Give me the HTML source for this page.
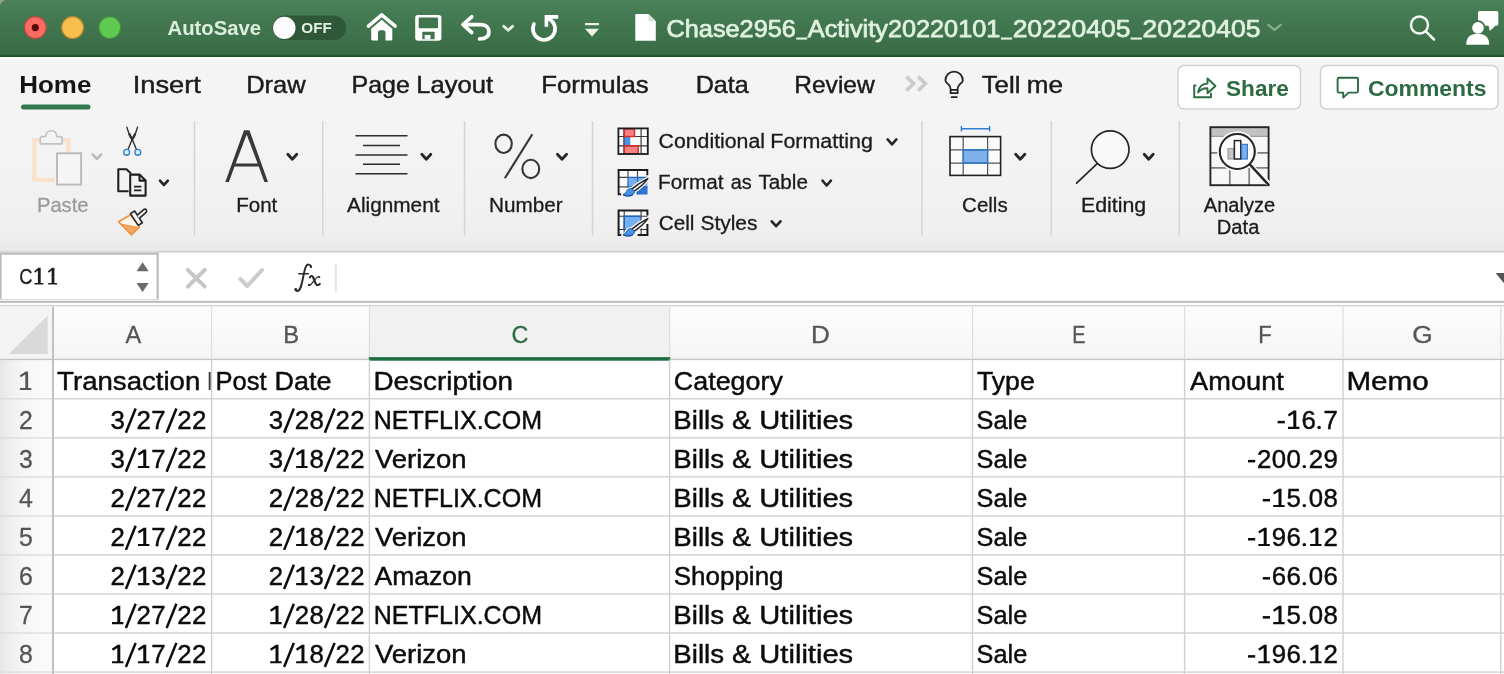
<!DOCTYPE html>
<html lang="en">
<head>
<meta charset="utf-8">
<title>Chase2956_Activity20220101_20220405_20220405</title>
<style>
html,body{margin:0;padding:0;background:#fff;overflow:hidden;}
#app{position:relative;width:1504px;height:674px;overflow:hidden;font-family:"Liberation Sans", sans-serif;}
svg{position:absolute;left:0;top:0;display:block;will-change:transform;}
svg text{font-family:"Liberation Sans", sans-serif;white-space:pre;}
.serif{font-family:"Liberation Serif", serif;}
</style>
</head>
<body>
<div id="app">
<svg width="1504" height="674" viewBox="0 0 1504 674">
<defs>
<linearGradient id="gTitle" x1="0" y1="0" x2="0" y2="1">
<stop offset="0" stop-color="#4a8158"/><stop offset="0.5" stop-color="#40754d"/><stop offset="1" stop-color="#396b44"/>
</linearGradient>
<linearGradient id="gRowHdr" x1="0" y1="0" x2="1" y2="0">
<stop offset="0" stop-color="#e6e6e6"/><stop offset="0.18" stop-color="#efefef"/><stop offset="0.45" stop-color="#f6f6f6"/><stop offset="1" stop-color="#fbfbfb"/>
</linearGradient>
<linearGradient id="gColHdr" x1="0" y1="0" x2="0" y2="1">
<stop offset="0" stop-color="#fdfdfd"/><stop offset="1" stop-color="#f5f5f5"/>
</linearGradient>
</defs>
<g id="titlebar">
<rect x="0" y="0" width="1504" height="57" fill="url(#gTitle)"/>
<rect x="0" y="54.6" width="1504" height="1" fill="#33633e"/>
<rect x="0" y="55.5" width="1504" height="1.9" fill="#214d2c"/>
<path d="M0 0 H5.5 Q1.2 1.2 0 5.5 Z" fill="#93a397"/>
<circle cx="35.3" cy="27.6" r="10.9" fill="#fb6b62" stroke="#b94b3f" stroke-width="1.2"/>
<circle cx="35.3" cy="27.6" r="3.6" fill="#5a0907"/>
<circle cx="72.6" cy="27.6" r="10.9" fill="#f9bf4d" stroke="#b88a35" stroke-width="1.2"/>
<circle cx="109.8" cy="27.6" r="10.9" fill="#5fca52" stroke="#46923b" stroke-width="1.2"/>
<text x="167.49" y="35.10" textLength="93.66" lengthAdjust="spacingAndGlyphs" font-size="20.8" fill="#dcefdc" font-weight="bold" >AutoSave</text>
<rect x="272.5" y="15.5" width="73.5" height="24.6" rx="12.3" fill="#2e5838"/>
<circle cx="284.3" cy="27.9" r="11.2" fill="#fcfcfc"/>
<text x="301.39" y="33.30" textLength="30.43" lengthAdjust="spacingAndGlyphs" font-size="15" fill="#e4f1e4" font-weight="bold" >OFF</text>
<path d="M368.4 26.2 L381.7 14.9 L395.2 26.2" fill="none" stroke="#fff" stroke-width="3.5" stroke-linecap="round" stroke-linejoin="round"/>
<path d="M371.2 28.8 L381.7 19.8 L392.3 28.8 V39.2 Q392.3 40.4 391.1 40.4 H385.5 V32.8 Q385.5 30.3 383 30.3 H380.5 Q378 30.3 378 32.8 V40.4 H372.4 Q371.2 40.4 371.2 39.2 Z" fill="#fff"/>
<rect x="415.2" y="15" width="26.2" height="25.8" rx="2.8" fill="#fff"/>
<rect x="418.7" y="17.6" width="19.3" height="10.7" rx="0.8" fill="#3f744c"/>
<rect x="422.3" y="31.7" width="12.3" height="7.5" rx="0.6" fill="#3f744c"/>
<rect x="424.7" y="35" width="5.8" height="4.2" fill="#fff"/>
<g fill="none" stroke="#fff" stroke-width="3.7" stroke-linecap="round" stroke-linejoin="round"><path d="M471.7 16.8 L463 24.7 L471.7 32.5"/><path d="M464 24.7 H480.3 C486.6 24.7 489 28 489 31.8 C489 35.8 486.2 38.9 479.6 38.9"/></g>
<path d="M503.75 26.21 L508.20 30.25 L512.65 26.21" fill="none" stroke="#eef7ee" stroke-width="2.70" stroke-linecap="round" stroke-linejoin="round"/>
<g fill="none" stroke="#fff" stroke-width="3.6"><path d="M558.2 16.9 H546.4 V26.8" stroke-linejoin="miter"/><path d="M547.3 18.2 A11.1 11.1 0 1 1 534 24" stroke-linecap="round"/></g>
<rect x="585" y="23" width="14" height="2.2" fill="#e8f4e8"/>
<path d="M585 28.8 H599 L592 36.4 Z" fill="#e8f4e8"/>
<path d="M636.5 14 H648.5 L655.8 21.3 V40.8 H635.3 V15.2 Q635.3 14 636.5 14 Z" fill="#fff"/>
<path d="M648.5 14 L655.8 21.3 H649.7 Q648.5 21.3 648.5 20.1 Z" fill="#d4e4d7"/>
<text x="666.51" y="36.80" textLength="129.36" lengthAdjust="spacingAndGlyphs" font-size="24.6" fill="#e0f1e0" font-weight="normal"  stroke="#e0f1e0" stroke-width="0.75" stroke-linejoin="round">Chase2956</text>
<text x="807.85" y="36.80" textLength="192.47" lengthAdjust="spacingAndGlyphs" font-size="24.6" fill="#e0f1e0" font-weight="normal"  stroke="#e0f1e0" stroke-width="0.75" stroke-linejoin="round">Activity20220101</text>
<text x="1012.65" y="36.80" textLength="117.74" lengthAdjust="spacingAndGlyphs" font-size="24.6" fill="#e0f1e0" font-weight="normal"  stroke="#e0f1e0" stroke-width="0.75" stroke-linejoin="round">20220405</text>
<text x="1142.45" y="36.80" textLength="118.15" lengthAdjust="spacingAndGlyphs" font-size="24.6" fill="#e0f1e0" font-weight="normal"  stroke="#e0f1e0" stroke-width="0.75" stroke-linejoin="round">20220405</text>
<rect x="796.2" y="37.5" width="11.0" height="2.1" fill="#e0f1e0"/>
<rect x="1000.9" y="37.5" width="11.2" height="2.1" fill="#e0f1e0"/>
<rect x="1130.6" y="37.5" width="11.3" height="2.1" fill="#e0f1e0"/>
<path d="M1268.34 24.82 L1274.55 29.93 L1280.77 24.82" fill="none" stroke="#86ae8f" stroke-width="2.20" stroke-linecap="round" stroke-linejoin="round"/>
<g fill="none" stroke="#f2f8f2" stroke-width="2.5" stroke-linecap="round"><circle cx="1419.5" cy="25" r="8.5"/><path d="M1425.8 31.4 L1434 39.5"/></g>
<path d="M1479.8 11 H1496.5 Q1498.3 11 1498.3 12.8 V24 Q1498.3 25.8 1496.5 25.8 H1495.3 L1489.8 31 L1488.6 25.8 H1479.8 Q1478 25.8 1478 24 V12.8 Q1478 11 1479.8 11 Z" fill="#fff"/>
<circle cx="1478" cy="27.9" r="6.7" fill="#fff" stroke="#3f744c" stroke-width="1.7"/>
<path d="M1466.2 44.8 Q1466.2 33.8 1477.7 33.8 Q1489.2 33.8 1489.2 44.8 Z" fill="#fff"/>
</g>
<g id="tabs">
<defs><linearGradient id="gRib" x1="0" y1="0" x2="0" y2="1"><stop offset="0" stop-color="#f4f4f4"/><stop offset="0.5" stop-color="#f2f2f2"/><stop offset="0.85" stop-color="#efefef"/><stop offset="1" stop-color="#e9e9e9"/></linearGradient></defs>
<rect x="0" y="57" width="1504" height="60" fill="#f4f4f4"/>
<rect x="0" y="116" width="1504" height="136" fill="url(#gRib)"/>
<rect x="0" y="57.4" width="1504" height="2" fill="#fefcfc"/>
<rect x="0" y="59.4" width="1504" height="1.6" fill="#f9f7f7"/>
<text x="19.31" y="92.50" textLength="72.05" lengthAdjust="spacingAndGlyphs" font-size="24" fill="#151515" font-weight="bold" >Home</text>
<rect x="21" y="104.5" width="69.5" height="5" rx="2.5" fill="#2f7a4c"/>
<text x="132.77" y="92.50" textLength="68.17" lengthAdjust="spacingAndGlyphs" font-size="24" fill="#1b1b1b" font-weight="normal"  stroke="#1b1b1b" stroke-width="0.45" stroke-linejoin="round">Insert</text>
<text x="246.18" y="92.50" textLength="59.55" lengthAdjust="spacingAndGlyphs" font-size="24" fill="#1b1b1b" font-weight="normal"  stroke="#1b1b1b" stroke-width="0.45" stroke-linejoin="round">Draw</text>
<text x="351.53" y="92.50" textLength="58.28" lengthAdjust="spacingAndGlyphs" font-size="24" fill="#1b1b1b" font-weight="normal"  stroke="#1b1b1b" stroke-width="0.45" stroke-linejoin="round">Page</text>
<text x="416.38" y="92.50" textLength="76.79" lengthAdjust="spacingAndGlyphs" font-size="24" fill="#1b1b1b" font-weight="normal"  stroke="#1b1b1b" stroke-width="0.45" stroke-linejoin="round">Layout</text>
<text x="541.16" y="92.50" textLength="107.58" lengthAdjust="spacingAndGlyphs" font-size="24" fill="#1b1b1b" font-weight="normal"  stroke="#1b1b1b" stroke-width="0.45" stroke-linejoin="round">Formulas</text>
<text x="695.71" y="92.50" textLength="53.12" lengthAdjust="spacingAndGlyphs" font-size="24" fill="#1b1b1b" font-weight="normal"  stroke="#1b1b1b" stroke-width="0.45" stroke-linejoin="round">Data</text>
<text x="794.26" y="92.50" textLength="80.48" lengthAdjust="spacingAndGlyphs" font-size="24" fill="#1b1b1b" font-weight="normal"  stroke="#1b1b1b" stroke-width="0.45" stroke-linejoin="round">Review</text>
<text x="981.78" y="92.50" textLength="38.58" lengthAdjust="spacingAndGlyphs" font-size="24" fill="#1b1b1b" font-weight="normal"  stroke="#1b1b1b" stroke-width="0.45" stroke-linejoin="round">Tell</text>
<text x="1026.73" y="92.50" textLength="36.20" lengthAdjust="spacingAndGlyphs" font-size="24" fill="#1b1b1b" font-weight="normal"  stroke="#1b1b1b" stroke-width="0.45" stroke-linejoin="round">me</text>
<g fill="none" stroke="#cbcbcb" stroke-width="3.6" stroke-linejoin="miter"><path d="M906.4 76.6 L913.6 83.6 L906.4 90.6"/><path d="M918.2 76.6 L925.4 83.6 L918.2 90.6"/></g>
<g fill="none" stroke="#222" stroke-width="1.8" stroke-linecap="round" stroke-linejoin="round"><path d="M950.6 93.2 V89 Q950.6 86.6 948.2 84.2 Q945.4 81.6 945.4 80.4 A8.7 8.7 0 1 1 962.8 80.4 Q962.8 81.6 960 84.2 Q957.6 86.6 957.6 89 V93.2 Z"/><path d="M950.8 89.8 H957.4"/><path d="M951.6 97.2 H956.8"/></g>
<rect x="1178" y="65.5" width="122.5" height="43.5" rx="6" fill="#fff" stroke="#d2d2d2" stroke-width="1.5"/>
<g fill="none" stroke="#2c6b42" stroke-width="1.9" stroke-linecap="round" stroke-linejoin="round"><path d="M1195.5 85.5 H1194.2 V97.3 H1211 V93.5"/><path d="M1198 92.5 Q1199.5 83.6 1207.5 83.6 V78.5 L1215.5 86 L1207.5 93.2 V88.3 Q1201.5 88 1198 92.5 Z"/></g>
<text x="1226.07" y="96.20" textLength="62.70" lengthAdjust="spacingAndGlyphs" font-size="22.5" fill="#2c6b42" font-weight="bold" >Share</text>
<rect x="1320.5" y="65.5" width="177.5" height="43.5" rx="6" fill="#fff" stroke="#d2d2d2" stroke-width="1.5"/>
<path d="M1339 77.8 H1356.6 Q1358 77.8 1358 79.2 V91.2 Q1358 92.6 1356.6 92.6 H1348.6 L1343.2 97.6 V92.6 H1339 Q1337.6 92.6 1337.6 91.2 V79.2 Q1337.6 77.8 1339 77.8 Z" fill="none" stroke="#2c6b42" stroke-width="1.9" stroke-linejoin="round"/>
<text x="1368.08" y="96.20" textLength="118.39" lengthAdjust="spacingAndGlyphs" font-size="22.5" fill="#2c6b42" font-weight="bold" >Comments</text>
</g>
<g id="ribbon">
<rect x="193.8" y="121" width="1.4" height="114.5" fill="#d3d3d3"/>
<rect x="322.1" y="121" width="1.4" height="114.5" fill="#d3d3d3"/>
<rect x="463.8" y="121" width="1.4" height="114.5" fill="#d3d3d3"/>
<rect x="591.8" y="121" width="1.4" height="114.5" fill="#d3d3d3"/>
<rect x="921.3" y="121" width="1.4" height="114.5" fill="#d3d3d3"/>
<rect x="1050.5" y="121" width="1.4" height="114.5" fill="#d3d3d3"/>
<rect x="1178.5" y="121" width="1.4" height="114.5" fill="#d3d3d3"/>
<g id="paste">
<path d="M41 140.1 H34.3 V179.8 H54.6 M61 140.1 H68.4 V151.4" fill="none" stroke="#f9e2cb" stroke-width="4.3"/>
<path d="M40.3 143.9 V138 Q40.3 136.6 41.7 136.6 H45.6 Q46 130.8 51.2 130.8 Q56.4 130.8 56.8 136.6 H60.7 Q62.1 136.6 62.1 138 V143.9 Z" fill="#f4f4f4" stroke="#c2c2c2" stroke-width="1.6" stroke-linejoin="round"/>
<rect x="57" y="153.3" width="24.1" height="31.3" fill="#f5f5f5" stroke="#b9b9b9" stroke-width="1.9"/>
<path d="M92.72 154.40 L96.95 158.82 L101.18 154.40" fill="none" stroke="#b8b8b8" stroke-width="2.40" stroke-linecap="round" stroke-linejoin="round"/>
<text x="36.94" y="211.70" textLength="51.56" lengthAdjust="spacingAndGlyphs" font-size="20" fill="#9b9b9b" font-weight="normal"  stroke="#9b9b9b" stroke-width="0.3" stroke-linejoin="round">Paste</text>
</g>
<g id="cut" fill="none" stroke-linecap="round"><path d="M126.9 127.3 Q128.6 134.4 132.2 139.3 L136.3 149.3 M137.5 127.3 Q135.8 134.4 132.2 139.3 L128.1 149.3" stroke="#333" stroke-width="1.45"/><path d="M129.4 134.2 Q130.6 137 132.2 139.3 M135 134.2 Q133.8 137 132.2 139.3" stroke="#333" stroke-width="2.3"/><circle cx="126.6" cy="152.3" r="2.95" stroke="#2f7fc6" stroke-width="1.35" fill="#dcf0fb"/><circle cx="137.8" cy="152.3" r="2.95" stroke="#2f7fc6" stroke-width="1.35" fill="#dcf0fb"/></g>
<g id="copy" fill="none" stroke="#1e1e1e" stroke-width="2.05" stroke-linejoin="round"><path d="M128.6 191.3 H118.3 V169.3 H126.5 L131 173.6"/><path d="M130.2 174.6 H139.5 L145.6 180.6 V195.6 H130.2 Z" fill="#f3f3f3"/><path d="M139.5 174.6 V180.6 H145.6"/><path d="M134 186.6 H141.4 M134 190.4 H141.4" stroke-width="1.6"/></g>
<path d="M160.09 180.85 L163.90 184.89 L167.71 180.85" fill="none" stroke="#262626" stroke-width="2.80" stroke-linecap="round" stroke-linejoin="round"/>
<g id="painter"><path d="M118.6 221.8 L130.6 214.8 L139.6 226.8 L131.4 234.9 Z" fill="#fdf4ea" stroke="#ee8f3c" stroke-width="1.6" stroke-linejoin="round"/><path d="M121.2 224.2 L138.6 227.6 L131.4 234.7 Z" fill="#f3a562" stroke="#ee8f3c" stroke-width="1" stroke-linejoin="round"/><path d="M130.4 213.6 L134.6 211 L142.4 222.8 L138.2 225.4 Z" fill="#f6f6f6" stroke="#262626" stroke-width="1.6" stroke-linejoin="round"/><path d="M137.2 215.4 L143.6 209.6 Q145.4 208.4 146.4 210 Q147.2 211.6 145.6 212.8 L139.2 218.4" fill="#f6f6f6" stroke="#262626" stroke-width="1.6" stroke-linejoin="round"/></g>
<g id="font"><path fill-rule="evenodd" fill="#383838" d="M225.3 182 L244 130.2 H249.4 L268 182 H264.4 L258.77 166.4 H234.53 L228.9 182 Z M246.65 134.6 L257.65 163.4 H235.65 Z"/>
<path d="M287.79 154.25 L292.30 159.29 L296.81 154.25" fill="none" stroke="#262626" stroke-width="2.80" stroke-linecap="round" stroke-linejoin="round"/>
<text x="236.21" y="211.70" textLength="41.07" lengthAdjust="spacingAndGlyphs" font-size="20" fill="#1b1b1b" font-weight="normal"  stroke="#1b1b1b" stroke-width="0.3" stroke-linejoin="round">Font</text>
</g>
<g id="alignment" stroke="#2c2c2c" stroke-width="1.5"><path d="M355.5 135.8 H407.5 M363 145.6 H400 M355.5 155 H407.5 M363 164.3 H400 M355.5 173.8 H407.5"/></g>
<path d="M421.79 154.25 L426.30 159.29 L430.81 154.25" fill="none" stroke="#262626" stroke-width="2.80" stroke-linecap="round" stroke-linejoin="round"/>
<text x="347.05" y="211.70" textLength="92.45" lengthAdjust="spacingAndGlyphs" font-size="20" fill="#1b1b1b" font-weight="normal"  stroke="#1b1b1b" stroke-width="0.3" stroke-linejoin="round">Alignment</text>
<g id="number" fill="none" stroke="#353535" stroke-width="2.1"><ellipse cx="503.6" cy="143.8" rx="8.2" ry="9.2"/><ellipse cx="530.8" cy="168.9" rx="8.4" ry="9.2"/><path d="M532.3 134.3 L504.8 178.2"/></g>
<path d="M557.39 154.25 L562.00 159.29 L566.61 154.25" fill="none" stroke="#262626" stroke-width="2.80" stroke-linecap="round" stroke-linejoin="round"/>
<text x="488.99" y="211.70" textLength="73.70" lengthAdjust="spacingAndGlyphs" font-size="20" fill="#1b1b1b" font-weight="normal"  stroke="#1b1b1b" stroke-width="0.3" stroke-linejoin="round">Number</text>
<g id="cf">
<rect x="618.4" y="128.4" width="29.4" height="25.6" fill="#fbfbfb"/>
<rect x="624" y="128.4" width="10.5" height="8.1" fill="#f98282"/>
<rect x="624" y="136.5" width="6.3" height="9.3" fill="#4a92e2"/>
<rect x="624" y="145.8" width="14.2" height="8.2" fill="#f98282"/>
<path d="M618.4 136.5 H647.8 M618.4 145.8 H647.8 M623.9 128.4 V154 M641.1 128.4 V154" stroke="#3a3a3a" stroke-width="1.2" fill="none"/>
<path d="M624.4 129 H634.5 V136.5 H624.4 Z M624.4 145.8 H638.2 V153.6 H624.4 Z M630.6 136.5 H634.5 M630.6 145.8 H638.2" fill="none" stroke="#d82c2c" stroke-width="1.4"/>
<rect x="618.4" y="128.4" width="29.4" height="25.6" fill="none" stroke="#1c1c1c" stroke-width="1.8"/>
</g>
<text x="658.59" y="148.20" textLength="106.42" lengthAdjust="spacingAndGlyphs" font-size="20" fill="#1b1b1b" font-weight="normal"  stroke="#1b1b1b" stroke-width="0.3" stroke-linejoin="round">Conditional</text><text x="770.33" y="148.20" textLength="102.49" lengthAdjust="spacingAndGlyphs" font-size="20" fill="#1b1b1b" font-weight="normal"  stroke="#1b1b1b" stroke-width="0.3" stroke-linejoin="round">Formatting</text>
<path d="M887.61 139.38 L892.00 144.31 L896.39 139.38" fill="none" stroke="#262626" stroke-width="2.60" stroke-linecap="round" stroke-linejoin="round"/>
<g id="fat">
<rect x="618.5" y="170" width="28.9" height="24.4" fill="#fbfbfb"/>
<path d="M628 177.4 H647.4 V194.4 H628 Z" fill="#74b0f0"/>
<path d="M637.5 186.9 H647.4 V194.4 H637.5 Z" fill="#2f74cc"/>
<path d="M618.5 177.4 H628 M618.5 186.9 H628 M628 170 V177.4 M637.5 170 V177.4" stroke="#4a4a4a" stroke-width="1.2" fill="none"/>
<path d="M628 177.4 H647.4 M628 177.4 V194.4 M637.5 177.4 V194.4 M628 186.9 H647.4" stroke="#2563b8" stroke-width="1.2" fill="none"/>
<path d="M647.3 175.2 V170 H618.6 V194.3 H621.2" fill="none" stroke="#1c1c1c" stroke-width="1.9"/>
<g transform="translate(618.2,170)"><path d="M29.4 8.8 Q21.6 12.4 13.4 19.4 L15.4 21.6 Q24.6 15.4 29.4 8.8 Z" fill="none" stroke="#f6f6f6" stroke-width="4.2" stroke-linejoin="round"/><path d="M12.8 18.4 Q9 18.8 8.2 21.6 Q7.4 24 4.6 24.6 Q10 27.4 14.2 25 Q17.4 23 16.2 21 Z" fill="none" stroke="#f6f6f6" stroke-width="3" stroke-linejoin="round"/><path d="M29.6 8.6 Q21.6 12.4 13.4 19.4 L15.4 21.6 Q24.8 15.4 29.6 8.6 Z" fill="#fdfdfd" stroke="#1e1e1e" stroke-width="1.5" stroke-linejoin="round"/><path d="M12.8 18.4 Q9 18.8 8.2 21.6 Q7.4 24 4.6 24.6 Q10 27.4 14.2 25 Q17.4 23 16.2 21 Z" fill="#4a92e2" stroke="#2563b8" stroke-width="1" stroke-linejoin="round"/><path d="M5.4 24.8 Q10 27 14.2 24.8" fill="none" stroke="#1f57a8" stroke-width="1.3" stroke-linecap="round"/></g>
</g>
<text x="658.10" y="189.40" textLength="65.40" lengthAdjust="spacingAndGlyphs" font-size="20" fill="#1b1b1b" font-weight="normal"  stroke="#1b1b1b" stroke-width="0.3" stroke-linejoin="round">Format</text><text x="730.65" y="189.40" textLength="21.02" lengthAdjust="spacingAndGlyphs" font-size="20" fill="#1b1b1b" font-weight="normal"  stroke="#1b1b1b" stroke-width="0.3" stroke-linejoin="round">as</text><text x="758.43" y="189.40" textLength="49.56" lengthAdjust="spacingAndGlyphs" font-size="20" fill="#1b1b1b" font-weight="normal"  stroke="#1b1b1b" stroke-width="0.3" stroke-linejoin="round">Table</text>
<path d="M822.50 180.57 L826.70 185.50 L830.89 180.57" fill="none" stroke="#262626" stroke-width="2.60" stroke-linecap="round" stroke-linejoin="round"/>
<g id="cs">
<rect x="618.5" y="210.6" width="29" height="24.6" fill="#fbfbfb"/>
<rect x="624.2" y="216.2" width="16.9" height="13.3" fill="#74b0f0"/>
<path d="M618.5 216.2 H647.5 M618.5 229.5 H647.5 M624.2 210.6 V235.2 M641.1 210.6 V235.2" stroke="#3a3a3a" stroke-width="1.1" fill="none"/>
<path d="M641.1 216.2 H624.2 V229.5" fill="none" stroke="#2563b8" stroke-width="1.5"/>
<path d="M647.4 215.4 V210.6 H618.6 V235.1 H621.4 M637.6 235.1 H647.4 V224" fill="none" stroke="#1c1c1c" stroke-width="2"/>
<g transform="translate(618.2,210)"><path d="M29.4 8.8 Q21.6 12.4 13.4 19.4 L15.4 21.6 Q24.6 15.4 29.4 8.8 Z" fill="none" stroke="#f6f6f6" stroke-width="4.2" stroke-linejoin="round"/><path d="M12.8 18.4 Q9 18.8 8.2 21.6 Q7.4 24 4.6 24.6 Q10 27.4 14.2 25 Q17.4 23 16.2 21 Z" fill="none" stroke="#f6f6f6" stroke-width="3" stroke-linejoin="round"/><path d="M29.6 8.6 Q21.6 12.4 13.4 19.4 L15.4 21.6 Q24.8 15.4 29.6 8.6 Z" fill="#fdfdfd" stroke="#1e1e1e" stroke-width="1.5" stroke-linejoin="round"/><path d="M12.8 18.4 Q9 18.8 8.2 21.6 Q7.4 24 4.6 24.6 Q10 27.4 14.2 25 Q17.4 23 16.2 21 Z" fill="#4a92e2" stroke="#2563b8" stroke-width="1" stroke-linejoin="round"/><path d="M5.4 24.8 Q10 27 14.2 24.8" fill="none" stroke="#1f57a8" stroke-width="1.3" stroke-linecap="round"/></g>
</g>
<text x="658.71" y="230.20" textLength="35.74" lengthAdjust="spacingAndGlyphs" font-size="20" fill="#1b1b1b" font-weight="normal"  stroke="#1b1b1b" stroke-width="0.3" stroke-linejoin="round">Cell</text><text x="700.41" y="230.20" textLength="57.04" lengthAdjust="spacingAndGlyphs" font-size="20" fill="#1b1b1b" font-weight="normal"  stroke="#1b1b1b" stroke-width="0.3" stroke-linejoin="round">Styles</text>
<path d="M771.71 221.28 L776.10 226.20 L780.50 221.28" fill="none" stroke="#262626" stroke-width="2.60" stroke-linecap="round" stroke-linejoin="round"/>
<g id="cells">
<rect x="950" y="136.6" width="50.6" height="38.8" fill="#fafafa"/>
<rect x="963.2" y="149.8" width="24.4" height="13.4" fill="#7fb0ea"/>
<path d="M950 149.8 H1000.6 M950 163.2 H1000.6 M963.2 136.6 V175.4 M987.6 136.6 V175.4" stroke="#555" stroke-width="1.2" fill="none"/>
<rect x="963.2" y="149.8" width="24.4" height="13.4" fill="none" stroke="#2f7cd3" stroke-width="1.5"/>
<rect x="950" y="136.6" width="50.6" height="38.8" fill="none" stroke="#222" stroke-width="1.6"/>
<path d="M961.4 128.8 H989.6 M961.4 126 V131.6 M989.6 126 V131.6" stroke="#2f7cd3" stroke-width="1.4" fill="none"/>
</g>
<path d="M1015.69 154.25 L1020.25 159.29 L1024.81 154.25" fill="none" stroke="#262626" stroke-width="2.80" stroke-linecap="round" stroke-linejoin="round"/>
<text x="962.13" y="211.70" textLength="45.49" lengthAdjust="spacingAndGlyphs" font-size="20" fill="#1b1b1b" font-weight="normal"  stroke="#1b1b1b" stroke-width="0.3" stroke-linejoin="round">Cells</text>
<g id="editing" fill="none" stroke="#262626" stroke-width="1.7" stroke-linecap="round"><circle cx="1110.2" cy="149.6" r="18.8" fill="#f9f9f9"/><path d="M1097.2 163.6 L1076.6 183.2"/></g>
<path d="M1144.19 154.25 L1148.70 159.29 L1153.21 154.25" fill="none" stroke="#262626" stroke-width="2.80" stroke-linecap="round" stroke-linejoin="round"/>
<text x="1080.94" y="211.70" textLength="65.24" lengthAdjust="spacingAndGlyphs" font-size="20" fill="#1b1b1b" font-weight="normal"  stroke="#1b1b1b" stroke-width="0.3" stroke-linejoin="round">Editing</text>
<g id="analyze">
<rect x="1210.4" y="127.2" width="58.2" height="58" fill="#f7f7f7"/>
<rect x="1210.4" y="127.2" width="58.2" height="7.9" fill="#c2c2c2"/>
<path d="M1210.4 136.1 H1268.6" stroke="#808080" stroke-width="1.3" fill="none"/>
<path d="M1210.4 152.8 H1268.6 M1210.4 167.8 H1268.6 M1229.8 168 V185 M1249.2 168 V185" stroke="#7d7d7d" stroke-width="1.7" fill="none"/>
<rect x="1210.4" y="127.2" width="58.2" height="58" fill="none" stroke="#262626" stroke-width="1.9"/>
<path d="M1251.5 166.5 L1267.6 182.6" stroke="#f7f7f7" stroke-width="5.2" stroke-linecap="round"/>
<circle cx="1237.3" cy="151.5" r="20.2" fill="#f7f7f7"/>
<circle cx="1237.3" cy="151.5" r="17.5" fill="#fcfcfc" stroke="#262626" stroke-width="2.1"/>
<path d="M1250 164.6 L1268.4 184.6" stroke="#262626" stroke-width="2.4" stroke-linecap="round"/>
<rect x="1228" y="148.6" width="6" height="10.4" fill="#c6c6c6" stroke="#909090" stroke-width="1"/>
<rect x="1234.4" y="140.6" width="6.4" height="18.4" fill="#fff" stroke="#262626" stroke-width="1.5"/>
<rect x="1241.6" y="144.4" width="5.8" height="14.6" fill="#7fb0ea" stroke="#2f7cd3" stroke-width="1.2"/>
</g>
<text x="1203.80" y="211.70" textLength="71.41" lengthAdjust="spacingAndGlyphs" font-size="20" fill="#1b1b1b" font-weight="normal"  stroke="#1b1b1b" stroke-width="0.3" stroke-linejoin="round">Analyze</text>
<text x="1216.79" y="233.50" textLength="42.61" lengthAdjust="spacingAndGlyphs" font-size="20" fill="#1b1b1b" font-weight="normal"  stroke="#1b1b1b" stroke-width="0.3" stroke-linejoin="round">Data</text>
</g>
<g id="formulabar">
<rect x="0" y="249.4" width="1504" height="1.4" fill="#ebebeb"/>
<rect x="0" y="250.8" width="1504" height="1.9" fill="#cbcbcb"/>
<rect x="0" y="252.7" width="1504" height="48.7" fill="#fff"/>
<rect x="0" y="250.8" width="158.7" height="1.9" fill="#dcdcdc"/>
<rect x="0" y="252.7" width="158.7" height="2" fill="#b9b9b9"/>
<rect x="0" y="254.6" width="1.7" height="45" fill="#bdbdbd"/>
<rect x="156.6" y="253" width="2.1" height="46.6" fill="#b9b9b9"/>
<rect x="0" y="298.9" width="158.7" height="1.3" fill="#dcdcdc"/>
<text x="19.13" y="284.40" textLength="13.30" lengthAdjust="spacingAndGlyphs" font-size="22.8" fill="#1e1e1e" font-weight="normal"  stroke="#1e1e1e" stroke-width="0.3" stroke-linejoin="round">C</text>
<path transform="translate(0,0)" d="M34.2 271.3 L38.5 267.8 H40.7 V282.9 H43.4 V284.6 H34.5 V282.9 H37.9 V270.6 L35.1 272.7 Z" fill="#1e1e1e"/><path transform="translate(13.7,0)" d="M34.2 271.3 L38.5 267.8 H40.7 V282.9 H43.4 V284.6 H34.5 V282.9 H37.9 V270.6 L35.1 272.7 Z" fill="#1e1e1e"/>
<path d="M136.5 271.2 L142.6 262.2 L148.7 271.2 Z M136.5 283 L142.6 292 L148.7 283 Z" fill="#6a6a6a"/>
<path d="M187.8 269.8 L204.8 286.6 M204.8 269.8 L187.8 286.6" stroke="#c6c6c6" stroke-width="4" stroke-linecap="round" fill="none"/>
<path d="M240.4 279.2 L247.3 286 L262 270" stroke="#cbcbcb" stroke-width="4" stroke-linecap="round" stroke-linejoin="round" fill="none"/>
<g id="fx" fill="none" stroke="#2b2b2b" stroke-linecap="round" stroke-linejoin="round"><path d="M311 266.6 C310.4 264.2 307.4 263.8 306 266.4 C304.6 269.2 303.7 274.4 302.5 280.2 C301.3 286 300.4 290.4 297.8 290.9 C296.4 291.1 295.6 290.4 295.6 289.6" stroke-width="2"/><path d="M298.8 273.8 H308.4" stroke-width="1.4"/><path d="M309.8 277.4 C310.8 275.5 312.5 275.7 313.2 277.5 L315.7 283.7 C316.5 285.6 318.3 285.7 319.8 283.8" stroke-width="2.1"/><path d="M319.4 276.8 C317.6 276 316.6 277.4 315 279.4 L311.6 283.6 C310.4 285.2 309.6 285.8 308.8 285" stroke-width="1.25"/><circle cx="310.9" cy="266.8" r="1.2" fill="#2b2b2b" stroke="none"/><circle cx="295.8" cy="289.4" r="1.35" fill="#2b2b2b" stroke="none"/><circle cx="319.3" cy="277" r="1.1" fill="#2b2b2b" stroke="none"/><circle cx="309" cy="284.9" r="1.1" fill="#2b2b2b" stroke="none"/></g>
<rect x="334.8" y="264" width="2" height="27.8" fill="#e3e3e3"/>
<path d="M1495.6 273 H1512 L1503.8 283 Z" fill="#555"/>
<rect x="0" y="300.9" width="1504" height="2" fill="#b9b9b9"/>
<rect x="0" y="302.9" width="1504" height="2.3" fill="#fcfcfc"/>
<rect x="0" y="305.2" width="1504" height="1.5" fill="#c9c9c9"/>
</g>
<g id="grid">
<rect x="0" y="306.7" width="1504" height="367.3" fill="#fff"/>
<rect x="0" y="306.7" width="1504" height="52.69999999999999" fill="url(#gColHdr)"/>
<rect x="0" y="359.4" width="53" height="314.6" fill="url(#gRowHdr)"/>
<rect x="0" y="306.7" width="53" height="52.69999999999999" fill="#f4f4f4"/>
<rect x="369.4" y="306.7" width="300.20000000000005" height="52.69999999999999" fill="#f1f1f1"/>
<path d="M47.6 315.4 V354 H8.8 Z" fill="#d9d9d9"/>
<rect x="52.4" y="306.7" width="1.2" height="52.69999999999999" fill="#dedede"/>
<rect x="211.0" y="306.7" width="1.2" height="52.69999999999999" fill="#dedede"/>
<rect x="368.79999999999995" y="306.7" width="1.2" height="52.69999999999999" fill="#dedede"/>
<rect x="669.0" y="306.7" width="1.2" height="52.69999999999999" fill="#dedede"/>
<rect x="971.9" y="306.7" width="1.2" height="52.69999999999999" fill="#dedede"/>
<rect x="1184.0" y="306.7" width="1.2" height="52.69999999999999" fill="#dedede"/>
<rect x="1342.4" y="306.7" width="1.2" height="52.69999999999999" fill="#dedede"/>
<rect x="1500.2" y="306.7" width="1.2" height="52.69999999999999" fill="#dedede"/>
<rect x="0" y="358.7" width="1504" height="1.4" fill="#c6c6c6"/>
<rect x="368.79999999999995" y="357.1" width="301.40000000000003" height="3.6" fill="#1f6f43"/>
<rect x="52.3" y="359.4" width="1.4" height="314.6" fill="#d0d0d0"/>
<rect x="210.9" y="359.4" width="1.4" height="314.6" fill="#d0d0d0"/>
<rect x="368.7" y="359.4" width="1.4" height="314.6" fill="#d0d0d0"/>
<rect x="668.9" y="359.4" width="1.4" height="314.6" fill="#d0d0d0"/>
<rect x="971.8" y="359.4" width="1.4" height="314.6" fill="#d0d0d0"/>
<rect x="1183.8999999999999" y="359.4" width="1.4" height="314.6" fill="#d0d0d0"/>
<rect x="1342.3" y="359.4" width="1.4" height="314.6" fill="#d0d0d0"/>
<rect x="1500.1" y="359.4" width="1.4" height="314.6" fill="#d0d0d0"/>
<rect x="53" y="398.10" width="1451" height="1.4" fill="#d0d0d0"/>
<rect x="0" y="398.10" width="53" height="1.4" fill="#dddddd"/>
<rect x="53" y="437.14" width="1451" height="1.4" fill="#d0d0d0"/>
<rect x="0" y="437.14" width="53" height="1.4" fill="#dddddd"/>
<rect x="53" y="476.18" width="1451" height="1.4" fill="#d0d0d0"/>
<rect x="0" y="476.18" width="53" height="1.4" fill="#dddddd"/>
<rect x="53" y="515.22" width="1451" height="1.4" fill="#d0d0d0"/>
<rect x="0" y="515.22" width="53" height="1.4" fill="#dddddd"/>
<rect x="53" y="554.26" width="1451" height="1.4" fill="#d0d0d0"/>
<rect x="0" y="554.26" width="53" height="1.4" fill="#dddddd"/>
<rect x="53" y="593.30" width="1451" height="1.4" fill="#d0d0d0"/>
<rect x="0" y="593.30" width="53" height="1.4" fill="#dddddd"/>
<rect x="53" y="632.34" width="1451" height="1.4" fill="#d0d0d0"/>
<rect x="0" y="632.34" width="53" height="1.4" fill="#dddddd"/>
<rect x="53" y="671.38" width="1451" height="1.4" fill="#d0d0d0"/>
<rect x="0" y="671.38" width="53" height="1.4" fill="#dddddd"/>
<rect x="52.1" y="306.7" width="1.9" height="367.3" fill="#bfbfbf"/>
<text x="125.53" y="343.20" textLength="15.67" lengthAdjust="spacingAndGlyphs" font-size="23.5" fill="#555" font-weight="normal"  stroke="#555" stroke-width="0.3" stroke-linejoin="round">A</text>
<text x="283.25" y="343.20" textLength="15.83" lengthAdjust="spacingAndGlyphs" font-size="23.5" fill="#555" font-weight="normal"  stroke="#555" stroke-width="0.3" stroke-linejoin="round">B</text>
<text x="511.48" y="343.20" textLength="16.85" lengthAdjust="spacingAndGlyphs" font-size="23.5" fill="#2c6e45" font-weight="normal"  stroke="#2c6e45" stroke-width="0.3" stroke-linejoin="round">C</text>
<text x="811.07" y="343.20" textLength="18.81" lengthAdjust="spacingAndGlyphs" font-size="23.5" fill="#555" font-weight="normal"  stroke="#555" stroke-width="0.3" stroke-linejoin="round">D</text>
<text x="1072.35" y="343.20" textLength="13.34" lengthAdjust="spacingAndGlyphs" font-size="23.5" fill="#555" font-weight="normal"  stroke="#555" stroke-width="0.3" stroke-linejoin="round">E</text>
<text x="1258.29" y="343.20" textLength="13.46" lengthAdjust="spacingAndGlyphs" font-size="23.5" fill="#555" font-weight="normal"  stroke="#555" stroke-width="0.3" stroke-linejoin="round">F</text>
<text x="1412.24" y="343.20" textLength="20.43" lengthAdjust="spacingAndGlyphs" font-size="23.5" fill="#555" font-weight="normal"  stroke="#555" stroke-width="0.3" stroke-linejoin="round">G</text>
<path d="M19.70 375.40 L25.60 371.50 H28.10 V387.90 H31.30 V389.90 H19.90 V387.90 H25.30 V374.60 L20.90 377.30 Z" fill="#555"/>
<text x="19.00" y="428.95" textLength="13.80" lengthAdjust="spacingAndGlyphs" font-size="26" fill="#555" font-weight="normal"  stroke="#555" stroke-width="0.3" stroke-linejoin="round">2</text>
<text x="19.00" y="468.00" textLength="13.80" lengthAdjust="spacingAndGlyphs" font-size="26" fill="#555" font-weight="normal"  stroke="#555" stroke-width="0.3" stroke-linejoin="round">3</text>
<text x="19.00" y="507.05" textLength="13.80" lengthAdjust="spacingAndGlyphs" font-size="26" fill="#555" font-weight="normal"  stroke="#555" stroke-width="0.3" stroke-linejoin="round">4</text>
<text x="19.00" y="546.10" textLength="13.80" lengthAdjust="spacingAndGlyphs" font-size="26" fill="#555" font-weight="normal"  stroke="#555" stroke-width="0.3" stroke-linejoin="round">5</text>
<text x="19.00" y="585.15" textLength="13.80" lengthAdjust="spacingAndGlyphs" font-size="26" fill="#555" font-weight="normal"  stroke="#555" stroke-width="0.3" stroke-linejoin="round">6</text>
<text x="19.00" y="624.20" textLength="13.80" lengthAdjust="spacingAndGlyphs" font-size="26" fill="#555" font-weight="normal"  stroke="#555" stroke-width="0.3" stroke-linejoin="round">7</text>
<text x="19.00" y="663.25" textLength="13.80" lengthAdjust="spacingAndGlyphs" font-size="26" fill="#555" font-weight="normal"  stroke="#555" stroke-width="0.3" stroke-linejoin="round">8</text>
<text x="57.13" y="389.90" textLength="143.20" lengthAdjust="spacingAndGlyphs" font-size="26" fill="#0c0c0c" font-weight="normal"  stroke="#0c0c0c" stroke-width="0.45" stroke-linejoin="round">Transaction</text>
<text x="215.48" y="389.90" textLength="51.04" lengthAdjust="spacingAndGlyphs" font-size="26" fill="#0c0c0c" font-weight="normal"  stroke="#0c0c0c" stroke-width="0.45" stroke-linejoin="round">Post</text>
<text x="274.57" y="389.90" textLength="56.84" lengthAdjust="spacingAndGlyphs" font-size="26" fill="#0c0c0c" font-weight="normal"  stroke="#0c0c0c" stroke-width="0.45" stroke-linejoin="round">Date</text>
<text x="373.49" y="389.90" textLength="139.45" lengthAdjust="spacingAndGlyphs" font-size="26" fill="#0c0c0c" font-weight="normal"  stroke="#0c0c0c" stroke-width="0.45" stroke-linejoin="round">Description</text>
<text x="673.88" y="389.90" textLength="108.96" lengthAdjust="spacingAndGlyphs" font-size="26" fill="#0c0c0c" font-weight="normal"  stroke="#0c0c0c" stroke-width="0.45" stroke-linejoin="round">Category</text>
<text x="976.96" y="389.90" textLength="57.76" lengthAdjust="spacingAndGlyphs" font-size="26" fill="#0c0c0c" font-weight="normal"  stroke="#0c0c0c" stroke-width="0.45" stroke-linejoin="round">Type</text>
<text x="1190.09" y="389.90" textLength="93.76" lengthAdjust="spacingAndGlyphs" font-size="26" fill="#0c0c0c" font-weight="normal"  stroke="#0c0c0c" stroke-width="0.45" stroke-linejoin="round">Amount</text>
<text x="1346.46" y="389.90" textLength="82.30" lengthAdjust="spacingAndGlyphs" font-size="26" fill="#0c0c0c" font-weight="normal"  stroke="#0c0c0c" stroke-width="0.45" stroke-linejoin="round">Memo</text>
<rect x="208.7" y="372.00" width="1.9" height="17.9" fill="#3a3a3a"/>
<text x="110.60" y="428.95" textLength="14.35" lengthAdjust="spacingAndGlyphs" font-size="26" fill="#0c0c0c" font-weight="normal"  stroke="#0c0c0c" stroke-width="0.45" stroke-linejoin="round">3</text><path d="M125.90 432.75 L135.65 408.55" stroke="#0c0c0c" stroke-width="2.5" fill="none"/><text x="136.55" y="428.95" textLength="14.35" lengthAdjust="spacingAndGlyphs" font-size="26" fill="#0c0c0c" font-weight="normal"  stroke="#0c0c0c" stroke-width="0.45" stroke-linejoin="round">2</text><text x="151.35" y="428.95" textLength="14.35" lengthAdjust="spacingAndGlyphs" font-size="26" fill="#0c0c0c" font-weight="normal"  stroke="#0c0c0c" stroke-width="0.45" stroke-linejoin="round">7</text><path d="M166.65 432.75 L176.40 408.55" stroke="#0c0c0c" stroke-width="2.5" fill="none"/><text x="177.30" y="428.95" textLength="14.35" lengthAdjust="spacingAndGlyphs" font-size="26" fill="#0c0c0c" font-weight="normal"  stroke="#0c0c0c" stroke-width="0.45" stroke-linejoin="round">2</text><text x="192.10" y="428.95" textLength="14.35" lengthAdjust="spacingAndGlyphs" font-size="26" fill="#0c0c0c" font-weight="normal"  stroke="#0c0c0c" stroke-width="0.45" stroke-linejoin="round">2</text>
<text x="268.80" y="428.95" textLength="14.35" lengthAdjust="spacingAndGlyphs" font-size="26" fill="#0c0c0c" font-weight="normal"  stroke="#0c0c0c" stroke-width="0.45" stroke-linejoin="round">3</text><path d="M284.10 432.75 L293.85 408.55" stroke="#0c0c0c" stroke-width="2.5" fill="none"/><text x="294.75" y="428.95" textLength="14.35" lengthAdjust="spacingAndGlyphs" font-size="26" fill="#0c0c0c" font-weight="normal"  stroke="#0c0c0c" stroke-width="0.45" stroke-linejoin="round">2</text><text x="309.55" y="428.95" textLength="14.35" lengthAdjust="spacingAndGlyphs" font-size="26" fill="#0c0c0c" font-weight="normal"  stroke="#0c0c0c" stroke-width="0.45" stroke-linejoin="round">8</text><path d="M324.85 432.75 L334.60 408.55" stroke="#0c0c0c" stroke-width="2.5" fill="none"/><text x="335.50" y="428.95" textLength="14.35" lengthAdjust="spacingAndGlyphs" font-size="26" fill="#0c0c0c" font-weight="normal"  stroke="#0c0c0c" stroke-width="0.45" stroke-linejoin="round">2</text><text x="350.30" y="428.95" textLength="14.35" lengthAdjust="spacingAndGlyphs" font-size="26" fill="#0c0c0c" font-weight="normal"  stroke="#0c0c0c" stroke-width="0.45" stroke-linejoin="round">2</text>
<rect x="1277.60" y="420.85" width="7.2" height="2.5" fill="#0c0c0c"/><path d="M1287.80 414.45 L1293.70 410.55 H1296.30 V426.85 H1299.40 V428.95 H1288.00 V426.85 H1293.30 V413.65 L1289.00 416.45 Z" fill="#0c0c0c"/><text x="1301.40" y="428.95" textLength="14.35" lengthAdjust="spacingAndGlyphs" font-size="26" fill="#0c0c0c" font-weight="normal"  stroke="#0c0c0c" stroke-width="0.45" stroke-linejoin="round">6</text><ellipse cx="1319.10" cy="427.50" rx="1.75" ry="1.65" fill="#0c0c0c"/><text x="1323.50" y="428.95" textLength="14.35" lengthAdjust="spacingAndGlyphs" font-size="26" fill="#0c0c0c" font-weight="normal"  stroke="#0c0c0c" stroke-width="0.45" stroke-linejoin="round">7</text>
<text x="373.72" y="428.95" textLength="168.32" lengthAdjust="spacingAndGlyphs" font-size="26" fill="#0c0c0c" font-weight="normal"  stroke="#0c0c0c" stroke-width="0.45" stroke-linejoin="round">NETFLIX.COM</text>
<text x="673.31" y="428.95" textLength="50.73" lengthAdjust="spacingAndGlyphs" font-size="26" fill="#0c0c0c" font-weight="normal"  stroke="#0c0c0c" stroke-width="0.45" stroke-linejoin="round">Bills</text>
<text x="732.13" y="428.95" textLength="18.93" lengthAdjust="spacingAndGlyphs" font-size="26" fill="#0c0c0c" font-weight="normal"  stroke="#0c0c0c" stroke-width="0.45" stroke-linejoin="round">&amp;</text>
<text x="759.34" y="428.95" textLength="93.83" lengthAdjust="spacingAndGlyphs" font-size="26" fill="#0c0c0c" font-weight="normal"  stroke="#0c0c0c" stroke-width="0.45" stroke-linejoin="round">Utilities</text>
<text x="976.59" y="428.95" textLength="50.67" lengthAdjust="spacingAndGlyphs" font-size="26" fill="#0c0c0c" font-weight="normal"  stroke="#0c0c0c" stroke-width="0.45" stroke-linejoin="round">Sale</text>
<text x="110.60" y="468.00" textLength="14.35" lengthAdjust="spacingAndGlyphs" font-size="26" fill="#0c0c0c" font-weight="normal"  stroke="#0c0c0c" stroke-width="0.45" stroke-linejoin="round">3</text><path d="M125.90 471.80 L135.65 447.60" stroke="#0c0c0c" stroke-width="2.5" fill="none"/><path d="M137.75 453.50 L143.65 449.60 H146.25 V465.90 H149.35 V468.00 H137.95 V465.90 H143.25 V452.70 L138.95 455.50 Z" fill="#0c0c0c"/><text x="151.35" y="468.00" textLength="14.35" lengthAdjust="spacingAndGlyphs" font-size="26" fill="#0c0c0c" font-weight="normal"  stroke="#0c0c0c" stroke-width="0.45" stroke-linejoin="round">7</text><path d="M166.65 471.80 L176.40 447.60" stroke="#0c0c0c" stroke-width="2.5" fill="none"/><text x="177.30" y="468.00" textLength="14.35" lengthAdjust="spacingAndGlyphs" font-size="26" fill="#0c0c0c" font-weight="normal"  stroke="#0c0c0c" stroke-width="0.45" stroke-linejoin="round">2</text><text x="192.10" y="468.00" textLength="14.35" lengthAdjust="spacingAndGlyphs" font-size="26" fill="#0c0c0c" font-weight="normal"  stroke="#0c0c0c" stroke-width="0.45" stroke-linejoin="round">2</text>
<text x="268.80" y="468.00" textLength="14.35" lengthAdjust="spacingAndGlyphs" font-size="26" fill="#0c0c0c" font-weight="normal"  stroke="#0c0c0c" stroke-width="0.45" stroke-linejoin="round">3</text><path d="M284.10 471.80 L293.85 447.60" stroke="#0c0c0c" stroke-width="2.5" fill="none"/><path d="M295.95 453.50 L301.85 449.60 H304.45 V465.90 H307.55 V468.00 H296.15 V465.90 H301.45 V452.70 L297.15 455.50 Z" fill="#0c0c0c"/><text x="309.55" y="468.00" textLength="14.35" lengthAdjust="spacingAndGlyphs" font-size="26" fill="#0c0c0c" font-weight="normal"  stroke="#0c0c0c" stroke-width="0.45" stroke-linejoin="round">8</text><path d="M324.85 471.80 L334.60 447.60" stroke="#0c0c0c" stroke-width="2.5" fill="none"/><text x="335.50" y="468.00" textLength="14.35" lengthAdjust="spacingAndGlyphs" font-size="26" fill="#0c0c0c" font-weight="normal"  stroke="#0c0c0c" stroke-width="0.45" stroke-linejoin="round">2</text><text x="350.30" y="468.00" textLength="14.35" lengthAdjust="spacingAndGlyphs" font-size="26" fill="#0c0c0c" font-weight="normal"  stroke="#0c0c0c" stroke-width="0.45" stroke-linejoin="round">2</text>
<rect x="1248.00" y="459.90" width="7.2" height="2.5" fill="#0c0c0c"/><text x="1257.00" y="468.00" textLength="14.35" lengthAdjust="spacingAndGlyphs" font-size="26" fill="#0c0c0c" font-weight="normal"  stroke="#0c0c0c" stroke-width="0.45" stroke-linejoin="round">2</text><text x="1271.80" y="468.00" textLength="14.35" lengthAdjust="spacingAndGlyphs" font-size="26" fill="#0c0c0c" font-weight="normal"  stroke="#0c0c0c" stroke-width="0.45" stroke-linejoin="round">0</text><text x="1286.60" y="468.00" textLength="14.35" lengthAdjust="spacingAndGlyphs" font-size="26" fill="#0c0c0c" font-weight="normal"  stroke="#0c0c0c" stroke-width="0.45" stroke-linejoin="round">0</text><ellipse cx="1304.30" cy="466.55" rx="1.75" ry="1.65" fill="#0c0c0c"/><text x="1308.70" y="468.00" textLength="14.35" lengthAdjust="spacingAndGlyphs" font-size="26" fill="#0c0c0c" font-weight="normal"  stroke="#0c0c0c" stroke-width="0.45" stroke-linejoin="round">2</text><text x="1323.50" y="468.00" textLength="14.35" lengthAdjust="spacingAndGlyphs" font-size="26" fill="#0c0c0c" font-weight="normal"  stroke="#0c0c0c" stroke-width="0.45" stroke-linejoin="round">9</text>
<text x="374.99" y="468.00" textLength="91.69" lengthAdjust="spacingAndGlyphs" font-size="26" fill="#0c0c0c" font-weight="normal"  stroke="#0c0c0c" stroke-width="0.45" stroke-linejoin="round">Verizon</text>
<text x="673.31" y="468.00" textLength="50.73" lengthAdjust="spacingAndGlyphs" font-size="26" fill="#0c0c0c" font-weight="normal"  stroke="#0c0c0c" stroke-width="0.45" stroke-linejoin="round">Bills</text>
<text x="732.13" y="468.00" textLength="18.93" lengthAdjust="spacingAndGlyphs" font-size="26" fill="#0c0c0c" font-weight="normal"  stroke="#0c0c0c" stroke-width="0.45" stroke-linejoin="round">&amp;</text>
<text x="759.34" y="468.00" textLength="93.83" lengthAdjust="spacingAndGlyphs" font-size="26" fill="#0c0c0c" font-weight="normal"  stroke="#0c0c0c" stroke-width="0.45" stroke-linejoin="round">Utilities</text>
<text x="976.59" y="468.00" textLength="50.67" lengthAdjust="spacingAndGlyphs" font-size="26" fill="#0c0c0c" font-weight="normal"  stroke="#0c0c0c" stroke-width="0.45" stroke-linejoin="round">Sale</text>
<text x="110.60" y="507.05" textLength="14.35" lengthAdjust="spacingAndGlyphs" font-size="26" fill="#0c0c0c" font-weight="normal"  stroke="#0c0c0c" stroke-width="0.45" stroke-linejoin="round">2</text><path d="M125.90 510.85 L135.65 486.65" stroke="#0c0c0c" stroke-width="2.5" fill="none"/><text x="136.55" y="507.05" textLength="14.35" lengthAdjust="spacingAndGlyphs" font-size="26" fill="#0c0c0c" font-weight="normal"  stroke="#0c0c0c" stroke-width="0.45" stroke-linejoin="round">2</text><text x="151.35" y="507.05" textLength="14.35" lengthAdjust="spacingAndGlyphs" font-size="26" fill="#0c0c0c" font-weight="normal"  stroke="#0c0c0c" stroke-width="0.45" stroke-linejoin="round">7</text><path d="M166.65 510.85 L176.40 486.65" stroke="#0c0c0c" stroke-width="2.5" fill="none"/><text x="177.30" y="507.05" textLength="14.35" lengthAdjust="spacingAndGlyphs" font-size="26" fill="#0c0c0c" font-weight="normal"  stroke="#0c0c0c" stroke-width="0.45" stroke-linejoin="round">2</text><text x="192.10" y="507.05" textLength="14.35" lengthAdjust="spacingAndGlyphs" font-size="26" fill="#0c0c0c" font-weight="normal"  stroke="#0c0c0c" stroke-width="0.45" stroke-linejoin="round">2</text>
<text x="268.80" y="507.05" textLength="14.35" lengthAdjust="spacingAndGlyphs" font-size="26" fill="#0c0c0c" font-weight="normal"  stroke="#0c0c0c" stroke-width="0.45" stroke-linejoin="round">2</text><path d="M284.10 510.85 L293.85 486.65" stroke="#0c0c0c" stroke-width="2.5" fill="none"/><text x="294.75" y="507.05" textLength="14.35" lengthAdjust="spacingAndGlyphs" font-size="26" fill="#0c0c0c" font-weight="normal"  stroke="#0c0c0c" stroke-width="0.45" stroke-linejoin="round">2</text><text x="309.55" y="507.05" textLength="14.35" lengthAdjust="spacingAndGlyphs" font-size="26" fill="#0c0c0c" font-weight="normal"  stroke="#0c0c0c" stroke-width="0.45" stroke-linejoin="round">8</text><path d="M324.85 510.85 L334.60 486.65" stroke="#0c0c0c" stroke-width="2.5" fill="none"/><text x="335.50" y="507.05" textLength="14.35" lengthAdjust="spacingAndGlyphs" font-size="26" fill="#0c0c0c" font-weight="normal"  stroke="#0c0c0c" stroke-width="0.45" stroke-linejoin="round">2</text><text x="350.30" y="507.05" textLength="14.35" lengthAdjust="spacingAndGlyphs" font-size="26" fill="#0c0c0c" font-weight="normal"  stroke="#0c0c0c" stroke-width="0.45" stroke-linejoin="round">2</text>
<rect x="1262.80" y="498.95" width="7.2" height="2.5" fill="#0c0c0c"/><path d="M1273.00 492.55 L1278.90 488.65 H1281.50 V504.95 H1284.60 V507.05 H1273.20 V504.95 H1278.50 V491.75 L1274.20 494.55 Z" fill="#0c0c0c"/><text x="1286.60" y="507.05" textLength="14.35" lengthAdjust="spacingAndGlyphs" font-size="26" fill="#0c0c0c" font-weight="normal"  stroke="#0c0c0c" stroke-width="0.45" stroke-linejoin="round">5</text><ellipse cx="1304.30" cy="505.60" rx="1.75" ry="1.65" fill="#0c0c0c"/><text x="1308.70" y="507.05" textLength="14.35" lengthAdjust="spacingAndGlyphs" font-size="26" fill="#0c0c0c" font-weight="normal"  stroke="#0c0c0c" stroke-width="0.45" stroke-linejoin="round">0</text><text x="1323.50" y="507.05" textLength="14.35" lengthAdjust="spacingAndGlyphs" font-size="26" fill="#0c0c0c" font-weight="normal"  stroke="#0c0c0c" stroke-width="0.45" stroke-linejoin="round">8</text>
<text x="373.72" y="507.05" textLength="168.32" lengthAdjust="spacingAndGlyphs" font-size="26" fill="#0c0c0c" font-weight="normal"  stroke="#0c0c0c" stroke-width="0.45" stroke-linejoin="round">NETFLIX.COM</text>
<text x="673.31" y="507.05" textLength="50.73" lengthAdjust="spacingAndGlyphs" font-size="26" fill="#0c0c0c" font-weight="normal"  stroke="#0c0c0c" stroke-width="0.45" stroke-linejoin="round">Bills</text>
<text x="732.13" y="507.05" textLength="18.93" lengthAdjust="spacingAndGlyphs" font-size="26" fill="#0c0c0c" font-weight="normal"  stroke="#0c0c0c" stroke-width="0.45" stroke-linejoin="round">&amp;</text>
<text x="759.34" y="507.05" textLength="93.83" lengthAdjust="spacingAndGlyphs" font-size="26" fill="#0c0c0c" font-weight="normal"  stroke="#0c0c0c" stroke-width="0.45" stroke-linejoin="round">Utilities</text>
<text x="976.59" y="507.05" textLength="50.67" lengthAdjust="spacingAndGlyphs" font-size="26" fill="#0c0c0c" font-weight="normal"  stroke="#0c0c0c" stroke-width="0.45" stroke-linejoin="round">Sale</text>
<text x="110.60" y="546.10" textLength="14.35" lengthAdjust="spacingAndGlyphs" font-size="26" fill="#0c0c0c" font-weight="normal"  stroke="#0c0c0c" stroke-width="0.45" stroke-linejoin="round">2</text><path d="M125.90 549.90 L135.65 525.70" stroke="#0c0c0c" stroke-width="2.5" fill="none"/><path d="M137.75 531.60 L143.65 527.70 H146.25 V544.00 H149.35 V546.10 H137.95 V544.00 H143.25 V530.80 L138.95 533.60 Z" fill="#0c0c0c"/><text x="151.35" y="546.10" textLength="14.35" lengthAdjust="spacingAndGlyphs" font-size="26" fill="#0c0c0c" font-weight="normal"  stroke="#0c0c0c" stroke-width="0.45" stroke-linejoin="round">7</text><path d="M166.65 549.90 L176.40 525.70" stroke="#0c0c0c" stroke-width="2.5" fill="none"/><text x="177.30" y="546.10" textLength="14.35" lengthAdjust="spacingAndGlyphs" font-size="26" fill="#0c0c0c" font-weight="normal"  stroke="#0c0c0c" stroke-width="0.45" stroke-linejoin="round">2</text><text x="192.10" y="546.10" textLength="14.35" lengthAdjust="spacingAndGlyphs" font-size="26" fill="#0c0c0c" font-weight="normal"  stroke="#0c0c0c" stroke-width="0.45" stroke-linejoin="round">2</text>
<text x="268.80" y="546.10" textLength="14.35" lengthAdjust="spacingAndGlyphs" font-size="26" fill="#0c0c0c" font-weight="normal"  stroke="#0c0c0c" stroke-width="0.45" stroke-linejoin="round">2</text><path d="M284.10 549.90 L293.85 525.70" stroke="#0c0c0c" stroke-width="2.5" fill="none"/><path d="M295.95 531.60 L301.85 527.70 H304.45 V544.00 H307.55 V546.10 H296.15 V544.00 H301.45 V530.80 L297.15 533.60 Z" fill="#0c0c0c"/><text x="309.55" y="546.10" textLength="14.35" lengthAdjust="spacingAndGlyphs" font-size="26" fill="#0c0c0c" font-weight="normal"  stroke="#0c0c0c" stroke-width="0.45" stroke-linejoin="round">8</text><path d="M324.85 549.90 L334.60 525.70" stroke="#0c0c0c" stroke-width="2.5" fill="none"/><text x="335.50" y="546.10" textLength="14.35" lengthAdjust="spacingAndGlyphs" font-size="26" fill="#0c0c0c" font-weight="normal"  stroke="#0c0c0c" stroke-width="0.45" stroke-linejoin="round">2</text><text x="350.30" y="546.10" textLength="14.35" lengthAdjust="spacingAndGlyphs" font-size="26" fill="#0c0c0c" font-weight="normal"  stroke="#0c0c0c" stroke-width="0.45" stroke-linejoin="round">2</text>
<rect x="1248.00" y="538.00" width="7.2" height="2.5" fill="#0c0c0c"/><path d="M1258.20 531.60 L1264.10 527.70 H1266.70 V544.00 H1269.80 V546.10 H1258.40 V544.00 H1263.70 V530.80 L1259.40 533.60 Z" fill="#0c0c0c"/><text x="1271.80" y="546.10" textLength="14.35" lengthAdjust="spacingAndGlyphs" font-size="26" fill="#0c0c0c" font-weight="normal"  stroke="#0c0c0c" stroke-width="0.45" stroke-linejoin="round">9</text><text x="1286.60" y="546.10" textLength="14.35" lengthAdjust="spacingAndGlyphs" font-size="26" fill="#0c0c0c" font-weight="normal"  stroke="#0c0c0c" stroke-width="0.45" stroke-linejoin="round">6</text><ellipse cx="1304.30" cy="544.65" rx="1.75" ry="1.65" fill="#0c0c0c"/><path d="M1309.90 531.60 L1315.80 527.70 H1318.40 V544.00 H1321.50 V546.10 H1310.10 V544.00 H1315.40 V530.80 L1311.10 533.60 Z" fill="#0c0c0c"/><text x="1323.50" y="546.10" textLength="14.35" lengthAdjust="spacingAndGlyphs" font-size="26" fill="#0c0c0c" font-weight="normal"  stroke="#0c0c0c" stroke-width="0.45" stroke-linejoin="round">2</text>
<text x="374.99" y="546.10" textLength="91.69" lengthAdjust="spacingAndGlyphs" font-size="26" fill="#0c0c0c" font-weight="normal"  stroke="#0c0c0c" stroke-width="0.45" stroke-linejoin="round">Verizon</text>
<text x="673.31" y="546.10" textLength="50.73" lengthAdjust="spacingAndGlyphs" font-size="26" fill="#0c0c0c" font-weight="normal"  stroke="#0c0c0c" stroke-width="0.45" stroke-linejoin="round">Bills</text>
<text x="732.13" y="546.10" textLength="18.93" lengthAdjust="spacingAndGlyphs" font-size="26" fill="#0c0c0c" font-weight="normal"  stroke="#0c0c0c" stroke-width="0.45" stroke-linejoin="round">&amp;</text>
<text x="759.34" y="546.10" textLength="93.83" lengthAdjust="spacingAndGlyphs" font-size="26" fill="#0c0c0c" font-weight="normal"  stroke="#0c0c0c" stroke-width="0.45" stroke-linejoin="round">Utilities</text>
<text x="976.59" y="546.10" textLength="50.67" lengthAdjust="spacingAndGlyphs" font-size="26" fill="#0c0c0c" font-weight="normal"  stroke="#0c0c0c" stroke-width="0.45" stroke-linejoin="round">Sale</text>
<text x="110.60" y="585.15" textLength="14.35" lengthAdjust="spacingAndGlyphs" font-size="26" fill="#0c0c0c" font-weight="normal"  stroke="#0c0c0c" stroke-width="0.45" stroke-linejoin="round">2</text><path d="M125.90 588.95 L135.65 564.75" stroke="#0c0c0c" stroke-width="2.5" fill="none"/><path d="M137.75 570.65 L143.65 566.75 H146.25 V583.05 H149.35 V585.15 H137.95 V583.05 H143.25 V569.85 L138.95 572.65 Z" fill="#0c0c0c"/><text x="151.35" y="585.15" textLength="14.35" lengthAdjust="spacingAndGlyphs" font-size="26" fill="#0c0c0c" font-weight="normal"  stroke="#0c0c0c" stroke-width="0.45" stroke-linejoin="round">3</text><path d="M166.65 588.95 L176.40 564.75" stroke="#0c0c0c" stroke-width="2.5" fill="none"/><text x="177.30" y="585.15" textLength="14.35" lengthAdjust="spacingAndGlyphs" font-size="26" fill="#0c0c0c" font-weight="normal"  stroke="#0c0c0c" stroke-width="0.45" stroke-linejoin="round">2</text><text x="192.10" y="585.15" textLength="14.35" lengthAdjust="spacingAndGlyphs" font-size="26" fill="#0c0c0c" font-weight="normal"  stroke="#0c0c0c" stroke-width="0.45" stroke-linejoin="round">2</text>
<text x="268.80" y="585.15" textLength="14.35" lengthAdjust="spacingAndGlyphs" font-size="26" fill="#0c0c0c" font-weight="normal"  stroke="#0c0c0c" stroke-width="0.45" stroke-linejoin="round">2</text><path d="M284.10 588.95 L293.85 564.75" stroke="#0c0c0c" stroke-width="2.5" fill="none"/><path d="M295.95 570.65 L301.85 566.75 H304.45 V583.05 H307.55 V585.15 H296.15 V583.05 H301.45 V569.85 L297.15 572.65 Z" fill="#0c0c0c"/><text x="309.55" y="585.15" textLength="14.35" lengthAdjust="spacingAndGlyphs" font-size="26" fill="#0c0c0c" font-weight="normal"  stroke="#0c0c0c" stroke-width="0.45" stroke-linejoin="round">3</text><path d="M324.85 588.95 L334.60 564.75" stroke="#0c0c0c" stroke-width="2.5" fill="none"/><text x="335.50" y="585.15" textLength="14.35" lengthAdjust="spacingAndGlyphs" font-size="26" fill="#0c0c0c" font-weight="normal"  stroke="#0c0c0c" stroke-width="0.45" stroke-linejoin="round">2</text><text x="350.30" y="585.15" textLength="14.35" lengthAdjust="spacingAndGlyphs" font-size="26" fill="#0c0c0c" font-weight="normal"  stroke="#0c0c0c" stroke-width="0.45" stroke-linejoin="round">2</text>
<rect x="1262.80" y="577.05" width="7.2" height="2.5" fill="#0c0c0c"/><text x="1271.80" y="585.15" textLength="14.35" lengthAdjust="spacingAndGlyphs" font-size="26" fill="#0c0c0c" font-weight="normal"  stroke="#0c0c0c" stroke-width="0.45" stroke-linejoin="round">6</text><text x="1286.60" y="585.15" textLength="14.35" lengthAdjust="spacingAndGlyphs" font-size="26" fill="#0c0c0c" font-weight="normal"  stroke="#0c0c0c" stroke-width="0.45" stroke-linejoin="round">6</text><ellipse cx="1304.30" cy="583.70" rx="1.75" ry="1.65" fill="#0c0c0c"/><text x="1308.70" y="585.15" textLength="14.35" lengthAdjust="spacingAndGlyphs" font-size="26" fill="#0c0c0c" font-weight="normal"  stroke="#0c0c0c" stroke-width="0.45" stroke-linejoin="round">0</text><text x="1323.50" y="585.15" textLength="14.35" lengthAdjust="spacingAndGlyphs" font-size="26" fill="#0c0c0c" font-weight="normal"  stroke="#0c0c0c" stroke-width="0.45" stroke-linejoin="round">6</text>
<text x="374.49" y="585.15" textLength="97.37" lengthAdjust="spacingAndGlyphs" font-size="26" fill="#0c0c0c" font-weight="normal"  stroke="#0c0c0c" stroke-width="0.45" stroke-linejoin="round">Amazon</text>
<text x="673.65" y="585.15" textLength="109.94" lengthAdjust="spacingAndGlyphs" font-size="26" fill="#0c0c0c" font-weight="normal"  stroke="#0c0c0c" stroke-width="0.45" stroke-linejoin="round">Shopping</text>
<text x="976.59" y="585.15" textLength="50.67" lengthAdjust="spacingAndGlyphs" font-size="26" fill="#0c0c0c" font-weight="normal"  stroke="#0c0c0c" stroke-width="0.45" stroke-linejoin="round">Sale</text>
<path d="M111.80 609.70 L117.70 605.80 H120.30 V622.10 H123.40 V624.20 H112.00 V622.10 H117.30 V608.90 L113.00 611.70 Z" fill="#0c0c0c"/><path d="M125.90 628.00 L135.65 603.80" stroke="#0c0c0c" stroke-width="2.5" fill="none"/><text x="136.55" y="624.20" textLength="14.35" lengthAdjust="spacingAndGlyphs" font-size="26" fill="#0c0c0c" font-weight="normal"  stroke="#0c0c0c" stroke-width="0.45" stroke-linejoin="round">2</text><text x="151.35" y="624.20" textLength="14.35" lengthAdjust="spacingAndGlyphs" font-size="26" fill="#0c0c0c" font-weight="normal"  stroke="#0c0c0c" stroke-width="0.45" stroke-linejoin="round">7</text><path d="M166.65 628.00 L176.40 603.80" stroke="#0c0c0c" stroke-width="2.5" fill="none"/><text x="177.30" y="624.20" textLength="14.35" lengthAdjust="spacingAndGlyphs" font-size="26" fill="#0c0c0c" font-weight="normal"  stroke="#0c0c0c" stroke-width="0.45" stroke-linejoin="round">2</text><text x="192.10" y="624.20" textLength="14.35" lengthAdjust="spacingAndGlyphs" font-size="26" fill="#0c0c0c" font-weight="normal"  stroke="#0c0c0c" stroke-width="0.45" stroke-linejoin="round">2</text>
<path d="M270.00 609.70 L275.90 605.80 H278.50 V622.10 H281.60 V624.20 H270.20 V622.10 H275.50 V608.90 L271.20 611.70 Z" fill="#0c0c0c"/><path d="M284.10 628.00 L293.85 603.80" stroke="#0c0c0c" stroke-width="2.5" fill="none"/><text x="294.75" y="624.20" textLength="14.35" lengthAdjust="spacingAndGlyphs" font-size="26" fill="#0c0c0c" font-weight="normal"  stroke="#0c0c0c" stroke-width="0.45" stroke-linejoin="round">2</text><text x="309.55" y="624.20" textLength="14.35" lengthAdjust="spacingAndGlyphs" font-size="26" fill="#0c0c0c" font-weight="normal"  stroke="#0c0c0c" stroke-width="0.45" stroke-linejoin="round">8</text><path d="M324.85 628.00 L334.60 603.80" stroke="#0c0c0c" stroke-width="2.5" fill="none"/><text x="335.50" y="624.20" textLength="14.35" lengthAdjust="spacingAndGlyphs" font-size="26" fill="#0c0c0c" font-weight="normal"  stroke="#0c0c0c" stroke-width="0.45" stroke-linejoin="round">2</text><text x="350.30" y="624.20" textLength="14.35" lengthAdjust="spacingAndGlyphs" font-size="26" fill="#0c0c0c" font-weight="normal"  stroke="#0c0c0c" stroke-width="0.45" stroke-linejoin="round">2</text>
<rect x="1262.80" y="616.10" width="7.2" height="2.5" fill="#0c0c0c"/><path d="M1273.00 609.70 L1278.90 605.80 H1281.50 V622.10 H1284.60 V624.20 H1273.20 V622.10 H1278.50 V608.90 L1274.20 611.70 Z" fill="#0c0c0c"/><text x="1286.60" y="624.20" textLength="14.35" lengthAdjust="spacingAndGlyphs" font-size="26" fill="#0c0c0c" font-weight="normal"  stroke="#0c0c0c" stroke-width="0.45" stroke-linejoin="round">5</text><ellipse cx="1304.30" cy="622.75" rx="1.75" ry="1.65" fill="#0c0c0c"/><text x="1308.70" y="624.20" textLength="14.35" lengthAdjust="spacingAndGlyphs" font-size="26" fill="#0c0c0c" font-weight="normal"  stroke="#0c0c0c" stroke-width="0.45" stroke-linejoin="round">0</text><text x="1323.50" y="624.20" textLength="14.35" lengthAdjust="spacingAndGlyphs" font-size="26" fill="#0c0c0c" font-weight="normal"  stroke="#0c0c0c" stroke-width="0.45" stroke-linejoin="round">8</text>
<text x="373.72" y="624.20" textLength="168.32" lengthAdjust="spacingAndGlyphs" font-size="26" fill="#0c0c0c" font-weight="normal"  stroke="#0c0c0c" stroke-width="0.45" stroke-linejoin="round">NETFLIX.COM</text>
<text x="673.31" y="624.20" textLength="50.73" lengthAdjust="spacingAndGlyphs" font-size="26" fill="#0c0c0c" font-weight="normal"  stroke="#0c0c0c" stroke-width="0.45" stroke-linejoin="round">Bills</text>
<text x="732.13" y="624.20" textLength="18.93" lengthAdjust="spacingAndGlyphs" font-size="26" fill="#0c0c0c" font-weight="normal"  stroke="#0c0c0c" stroke-width="0.45" stroke-linejoin="round">&amp;</text>
<text x="759.34" y="624.20" textLength="93.83" lengthAdjust="spacingAndGlyphs" font-size="26" fill="#0c0c0c" font-weight="normal"  stroke="#0c0c0c" stroke-width="0.45" stroke-linejoin="round">Utilities</text>
<text x="976.59" y="624.20" textLength="50.67" lengthAdjust="spacingAndGlyphs" font-size="26" fill="#0c0c0c" font-weight="normal"  stroke="#0c0c0c" stroke-width="0.45" stroke-linejoin="round">Sale</text>
<path d="M111.80 648.75 L117.70 644.85 H120.30 V661.15 H123.40 V663.25 H112.00 V661.15 H117.30 V647.95 L113.00 650.75 Z" fill="#0c0c0c"/><path d="M125.90 667.05 L135.65 642.85" stroke="#0c0c0c" stroke-width="2.5" fill="none"/><path d="M137.75 648.75 L143.65 644.85 H146.25 V661.15 H149.35 V663.25 H137.95 V661.15 H143.25 V647.95 L138.95 650.75 Z" fill="#0c0c0c"/><text x="151.35" y="663.25" textLength="14.35" lengthAdjust="spacingAndGlyphs" font-size="26" fill="#0c0c0c" font-weight="normal"  stroke="#0c0c0c" stroke-width="0.45" stroke-linejoin="round">7</text><path d="M166.65 667.05 L176.40 642.85" stroke="#0c0c0c" stroke-width="2.5" fill="none"/><text x="177.30" y="663.25" textLength="14.35" lengthAdjust="spacingAndGlyphs" font-size="26" fill="#0c0c0c" font-weight="normal"  stroke="#0c0c0c" stroke-width="0.45" stroke-linejoin="round">2</text><text x="192.10" y="663.25" textLength="14.35" lengthAdjust="spacingAndGlyphs" font-size="26" fill="#0c0c0c" font-weight="normal"  stroke="#0c0c0c" stroke-width="0.45" stroke-linejoin="round">2</text>
<path d="M270.00 648.75 L275.90 644.85 H278.50 V661.15 H281.60 V663.25 H270.20 V661.15 H275.50 V647.95 L271.20 650.75 Z" fill="#0c0c0c"/><path d="M284.10 667.05 L293.85 642.85" stroke="#0c0c0c" stroke-width="2.5" fill="none"/><path d="M295.95 648.75 L301.85 644.85 H304.45 V661.15 H307.55 V663.25 H296.15 V661.15 H301.45 V647.95 L297.15 650.75 Z" fill="#0c0c0c"/><text x="309.55" y="663.25" textLength="14.35" lengthAdjust="spacingAndGlyphs" font-size="26" fill="#0c0c0c" font-weight="normal"  stroke="#0c0c0c" stroke-width="0.45" stroke-linejoin="round">8</text><path d="M324.85 667.05 L334.60 642.85" stroke="#0c0c0c" stroke-width="2.5" fill="none"/><text x="335.50" y="663.25" textLength="14.35" lengthAdjust="spacingAndGlyphs" font-size="26" fill="#0c0c0c" font-weight="normal"  stroke="#0c0c0c" stroke-width="0.45" stroke-linejoin="round">2</text><text x="350.30" y="663.25" textLength="14.35" lengthAdjust="spacingAndGlyphs" font-size="26" fill="#0c0c0c" font-weight="normal"  stroke="#0c0c0c" stroke-width="0.45" stroke-linejoin="round">2</text>
<rect x="1248.00" y="655.15" width="7.2" height="2.5" fill="#0c0c0c"/><path d="M1258.20 648.75 L1264.10 644.85 H1266.70 V661.15 H1269.80 V663.25 H1258.40 V661.15 H1263.70 V647.95 L1259.40 650.75 Z" fill="#0c0c0c"/><text x="1271.80" y="663.25" textLength="14.35" lengthAdjust="spacingAndGlyphs" font-size="26" fill="#0c0c0c" font-weight="normal"  stroke="#0c0c0c" stroke-width="0.45" stroke-linejoin="round">9</text><text x="1286.60" y="663.25" textLength="14.35" lengthAdjust="spacingAndGlyphs" font-size="26" fill="#0c0c0c" font-weight="normal"  stroke="#0c0c0c" stroke-width="0.45" stroke-linejoin="round">6</text><ellipse cx="1304.30" cy="661.80" rx="1.75" ry="1.65" fill="#0c0c0c"/><path d="M1309.90 648.75 L1315.80 644.85 H1318.40 V661.15 H1321.50 V663.25 H1310.10 V661.15 H1315.40 V647.95 L1311.10 650.75 Z" fill="#0c0c0c"/><text x="1323.50" y="663.25" textLength="14.35" lengthAdjust="spacingAndGlyphs" font-size="26" fill="#0c0c0c" font-weight="normal"  stroke="#0c0c0c" stroke-width="0.45" stroke-linejoin="round">2</text>
<text x="374.99" y="663.25" textLength="91.69" lengthAdjust="spacingAndGlyphs" font-size="26" fill="#0c0c0c" font-weight="normal"  stroke="#0c0c0c" stroke-width="0.45" stroke-linejoin="round">Verizon</text>
<text x="673.31" y="663.25" textLength="50.73" lengthAdjust="spacingAndGlyphs" font-size="26" fill="#0c0c0c" font-weight="normal"  stroke="#0c0c0c" stroke-width="0.45" stroke-linejoin="round">Bills</text>
<text x="732.13" y="663.25" textLength="18.93" lengthAdjust="spacingAndGlyphs" font-size="26" fill="#0c0c0c" font-weight="normal"  stroke="#0c0c0c" stroke-width="0.45" stroke-linejoin="round">&amp;</text>
<text x="759.34" y="663.25" textLength="93.83" lengthAdjust="spacingAndGlyphs" font-size="26" fill="#0c0c0c" font-weight="normal"  stroke="#0c0c0c" stroke-width="0.45" stroke-linejoin="round">Utilities</text>
<text x="976.59" y="663.25" textLength="50.67" lengthAdjust="spacingAndGlyphs" font-size="26" fill="#0c0c0c" font-weight="normal"  stroke="#0c0c0c" stroke-width="0.45" stroke-linejoin="round">Sale</text>
</g>
</svg>
</div>
</body>
</html>
